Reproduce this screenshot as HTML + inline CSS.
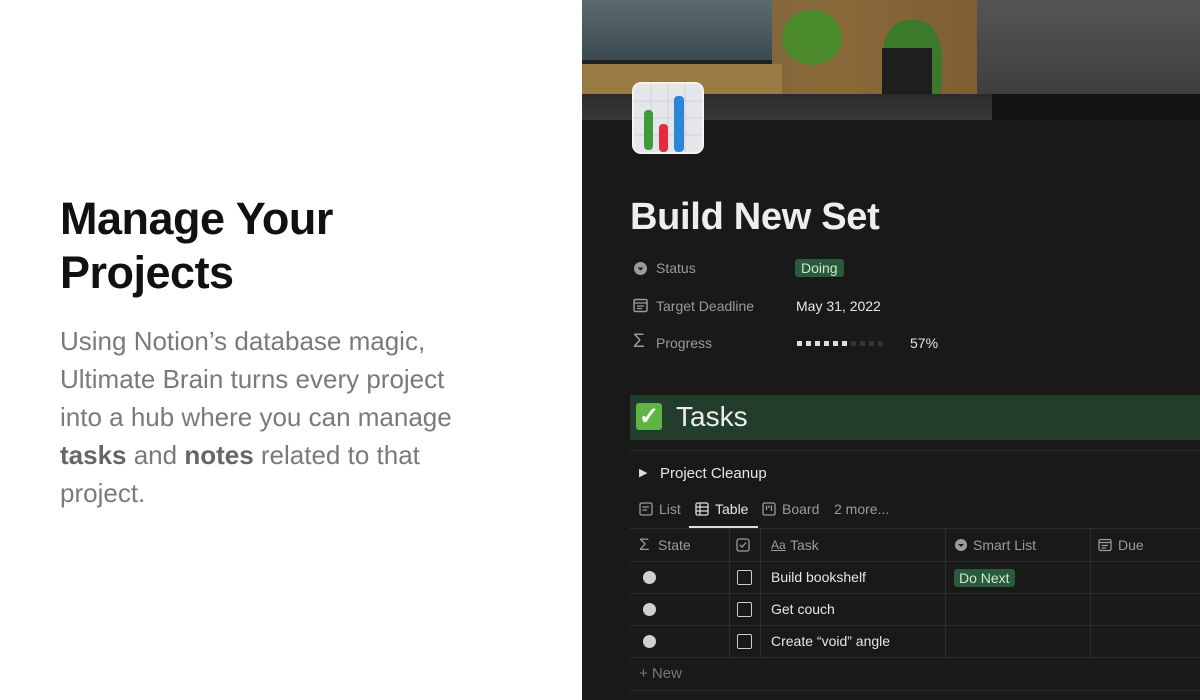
<!DOCTYPE html>
<html><head><meta charset="utf-8"><style>
*{margin:0;padding:0;box-sizing:border-box}
body{width:1200px;height:700px;overflow:hidden;background:#fff;font-family:"Liberation Sans",sans-serif;position:relative}
.left{position:absolute;left:0;top:0;width:582px;height:700px;background:#fff}
h1{position:absolute;left:60px;top:192px;font-size:45px;line-height:54px;font-weight:700;color:#111;letter-spacing:-0.5px}
.p{position:absolute;left:60px;top:322px;width:500px;font-size:26px;line-height:38px;color:#7a7a7a;white-space:nowrap}
.p b{color:#666}
.right{position:absolute;left:582px;top:0;width:618px;height:700px;background:#191919;overflow:hidden;color:#ddd;font-size:14px}
.a{position:absolute}
.t{position:absolute;white-space:nowrap}
.hl{position:absolute;height:1px;background:#2c2c2c}
.vl{position:absolute;width:1px;background:#2c2c2c}
.cb{position:absolute;width:15px;height:15px;border:1.5px solid #ccc;border-radius:2px}
.dot{position:absolute;width:13px;height:13px;border-radius:50%;background:#d0d0d0}
.gray{color:#9b9b9b}
</style></head><body>
<div class="left">
<h1>Manage Your<br>Projects</h1>
<div class="p">Using Notion’s database magic,<br>Ultimate Brain turns every project<br>into a hub where you can manage<br><b>tasks</b> and <b>notes</b> related to that<br>project.</div>
</div>
<div class="right">
<div class="a" style="left:0;top:0;width:618px;height:120px;background:linear-gradient(90deg,#6b5a3c 0%,#8a6a3a 40%,#7a5a30 70%,#3a3a3a 80%,#4a4a4a 100%)"></div>
<div class="a" style="left:0;top:0;width:190px;height:60px;background:linear-gradient(180deg,#5a6a70,#3c4a52)"></div>
<div class="a" style="left:0;top:60px;width:190px;height:4px;background:#222"></div>
<div class="a" style="left:0;top:64px;width:200px;height:30px;background:#9a7a45"></div>
<div class="a" style="left:200px;top:10px;width:60px;height:55px;background:#4a8a2a;border-radius:50%"></div>
<div class="a" style="left:300px;top:20px;width:60px;height:100px;background:#3a7a2a;border-radius:40%"></div>
<div class="a" style="left:300px;top:48px;width:50px;height:50px;background:#1e1e1e"></div>
<div class="a" style="left:395px;top:0;width:223px;height:95px;background:linear-gradient(180deg,#555,#3e3e3e)"></div>
<div class="a" style="left:0;top:94px;width:618px;height:26px;background:linear-gradient(180deg,#2a2a2a,#3a3a3a)"></div>
<div class="a" style="left:410px;top:94px;width:208px;height:26px;background:#141414"></div>
<div class="a" style="left:50px;top:82px;width:72px;height:72px;border-radius:9px;background:#e4e6ea;border:2px solid #f4f4f4;overflow:hidden">
<svg width="68" height="68" viewBox="0 0 68 68"><g stroke="#cfd2d8" stroke-width="1"><path d="M0 17H68M0 34H68M0 51H68M17 0V68M34 0V68M51 0V68"/></g>
<rect x="10" y="26" width="9" height="40" rx="4" fill="#3f9a3a"/><rect x="25" y="40" width="9" height="28" rx="4" fill="#e32a3e"/><rect x="40" y="12" width="10" height="56" rx="4" fill="#2b86d8"/></svg></div>
<div class="t" style="left:48px;top:196px;font-size:38px;font-weight:700;color:#eee;letter-spacing:-0.3px">Build New Set</div>
<svg class="a" style="left:51px;top:261px" width="15" height="15"><circle cx="7.5" cy="7.5" r="6.5" fill="#9b9b9b"/><path d="M4.5 6.5 7.5 9.5 10.5 6.5" fill="#191919"/></svg>
<div class="t gray" style="left:74px;top:260px">Status</div>
<div class="t" style="left:213px;top:259px;background:#2a5a3c;color:#cfe6d6;padding:1px 6px;border-radius:3px">Doing</div>
<svg class="a" style="left:51px;top:298px" width="15" height="15"><rect x="1" y="1.5" width="13" height="12" rx="1.5" fill="none" stroke="#9b9b9b" stroke-width="1.5"/><path d="M1 5H14M4 8H11M4 10.5H9" stroke="#9b9b9b" stroke-width="1.3"/></svg>
<div class="t gray" style="left:74px;top:298px">Target Deadline</div>
<div class="t" style="left:214px;top:298px;color:#e6e6e6">May 31, 2022</div>
<div class="t gray" style="left:51px;top:331px;font-size:19px">Σ</div>
<div class="t gray" style="left:74px;top:335px">Progress</div>
<div class="a" style="left:215px;top:341px;display:flex;gap:4px">
<i style="width:5px;height:5px;background:#ddd"></i><i style="width:5px;height:5px;background:#ddd"></i><i style="width:5px;height:5px;background:#ddd"></i><i style="width:5px;height:5px;background:#ddd"></i><i style="width:5px;height:5px;background:#ddd"></i><i style="width:5px;height:5px;background:#ddd"></i><i style="width:5px;height:5px;background:#333"></i><i style="width:5px;height:5px;background:#333"></i><i style="width:5px;height:5px;background:#333"></i><i style="width:5px;height:5px;background:#333"></i></div>
<div class="t" style="left:328px;top:335px;color:#e6e6e6">57%</div>
<div class="a" style="left:48px;top:395px;width:570px;height:45px;background:#233d2d"></div>
<div class="a" style="left:54px;top:403px;width:26px;height:27px;background:#5fb544;border-radius:3px;color:#fff;font-size:24px;font-weight:700;text-align:center;line-height:27px">✓</div>
<div class="t" style="left:94px;top:401px;font-size:28px;color:#eee">Tasks</div>
<div class="hl" style="left:48px;top:450px;width:570px"></div>
<div class="t" style="left:57px;top:466px;font-size:11px;color:#ddd">▶</div>
<div class="t" style="left:78px;top:465px;font-size:15px;color:#e6e6e6">Project Cleanup</div>
<svg class="a" style="left:57px;top:502px" width="14" height="14"><rect x="1" y="1" width="12" height="12" rx="1.5" fill="none" stroke="#9b9b9b" stroke-width="1.3"/><path d="M3.5 5H10M3.5 8H8" stroke="#9b9b9b" stroke-width="1.2"/></svg>
<div class="t gray" style="left:77px;top:501px">List</div>
<svg class="a" style="left:113px;top:502px" width="14" height="14"><rect x="1" y="1" width="12" height="12" rx="1.5" fill="none" stroke="#ddd" stroke-width="1.3"/><path d="M1 5H13M1 9H13M5 1V13" stroke="#ddd" stroke-width="1.2"/></svg>
<div class="t" style="left:133px;top:501px;color:#e6e6e6">Table</div>
<div class="a" style="left:107px;top:526px;width:69px;height:2px;background:#ddd"></div>
<svg class="a" style="left:180px;top:502px" width="14" height="14"><rect x="1" y="1" width="12" height="12" rx="1.5" fill="none" stroke="#9b9b9b" stroke-width="1.3"/><path d="M4.5 3.5V8M7 3.5V6M9.5 3.5V9" stroke="#9b9b9b" stroke-width="1.3"/></svg>
<div class="t gray" style="left:200px;top:501px">Board</div>
<div class="t gray" style="left:252px;top:501px">2 more...</div>
<div class="hl" style="left:48px;top:528px;width:570px"></div>
<div class="t gray" style="left:57px;top:535px;font-size:17px">Σ</div>
<div class="t gray" style="left:76px;top:537px">State</div>
<svg class="a" style="left:154px;top:538px" width="14" height="14"><rect x="1" y="1" width="12" height="12" rx="2" fill="none" stroke="#9b9b9b" stroke-width="1.3"/><path d="M4 7 6 9 10 4.5" fill="none" stroke="#9b9b9b" stroke-width="1.3"/></svg>
<div class="t gray" style="left:189px;top:538px;font-size:12px;text-decoration:underline">Aa</div>
<div class="t gray" style="left:208px;top:537px">Task</div>
<svg class="a" style="left:372px;top:538px" width="14" height="14"><circle cx="7" cy="7" r="6" fill="#9b9b9b"/><path d="M4 6 7 9 10 6" fill="#191919"/></svg>
<div class="t gray" style="left:391px;top:537px">Smart List</div>
<svg class="a" style="left:516px;top:538px" width="14" height="14"><rect x="1" y="1.5" width="12" height="11" rx="1.5" fill="none" stroke="#9b9b9b" stroke-width="1.3"/><path d="M1 4.5H13M3.5 7.5H10M3.5 10H8" stroke="#9b9b9b" stroke-width="1.2"/></svg>
<div class="t gray" style="left:536px;top:537px">Due</div>
<div class="hl" style="left:48px;top:561px;width:570px"></div>
<div class="hl" style="left:48px;top:593px;width:570px"></div>
<div class="hl" style="left:48px;top:625px;width:570px"></div>
<div class="hl" style="left:48px;top:657px;width:570px"></div>
<div class="hl" style="left:48px;top:690px;width:570px"></div>
<div class="vl" style="left:147px;top:529px;height:128px"></div>
<div class="vl" style="left:178px;top:529px;height:128px"></div>
<div class="vl" style="left:363px;top:529px;height:128px"></div>
<div class="vl" style="left:508px;top:529px;height:128px"></div>
<div class="dot" style="left:61px;top:571px"></div>
<div class="cb" style="left:155px;top:570px"></div>
<div class="t" style="left:189px;top:569px;color:#e6e6e6">Build bookshelf</div>
<div class="t" style="left:372px;top:569px;background:#2a5a3c;color:#cfe6d6;padding:1px 5px;border-radius:3px">Do Next</div>
<div class="dot" style="left:61px;top:603px"></div>
<div class="cb" style="left:155px;top:602px"></div>
<div class="t" style="left:189px;top:601px;color:#e6e6e6">Get couch</div>
<div class="dot" style="left:61px;top:635px"></div>
<div class="cb" style="left:155px;top:634px"></div>
<div class="t" style="left:189px;top:633px;color:#e6e6e6">Create “void” angle</div>
<div class="t" style="left:57px;top:665px;color:#777;font-size:15px">+ New</div>
</div>
</body></html>
